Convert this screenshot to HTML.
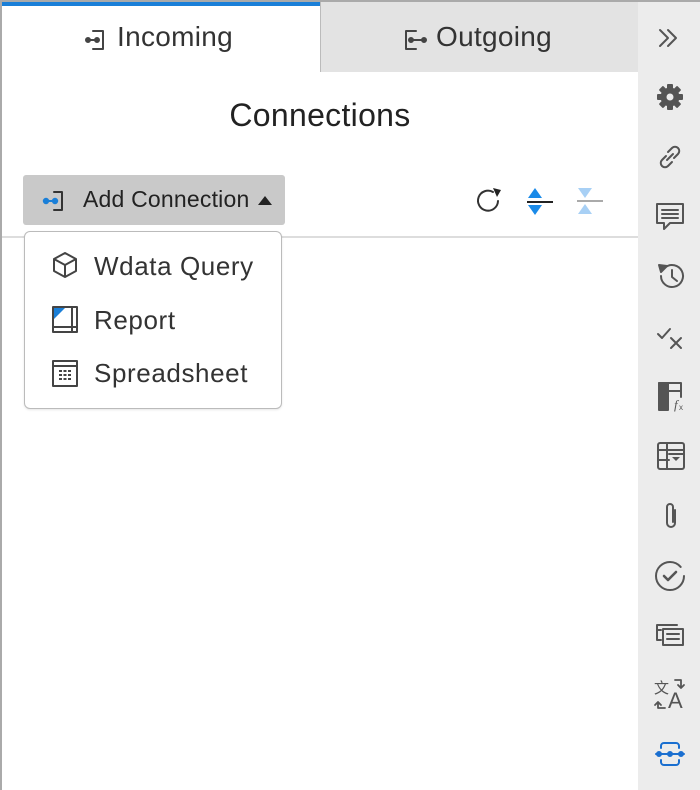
<!DOCTYPE html><html><head><style>
body{margin:0;width:700px;height:790px;overflow:hidden;font-family:"Liberation Sans",sans-serif;background:#fff;position:relative}
.a{position:absolute}
svg{position:absolute;fill:none;stroke-width:2;stroke-linecap:round;stroke-linejoin:round}
.t{font-size:28px;color:#333;letter-spacing:0.3px}
.m{font-size:26px;color:#333;letter-spacing:0.6px}
</style></head><body>
<div class="a" style="left:0;top:0;width:700px;height:2px;background:#aaa"></div>
<div class="a" style="left:0;top:0;width:2px;height:790px;background:#aaa"></div>
<div class="a" style="left:2px;top:2px;width:318px;height:4px;background:#1a7fd8"></div>
<div class="a" style="left:320px;top:2px;width:318px;height:70px;background:#e3e3e3;border-left:1px solid #bbb"></div>
<div class="a" style="left:638px;top:2px;width:62px;height:788px;background:#ececec"></div>
<svg style="left:83px;top:27px;stroke:#444" width="26" height="26" viewBox="0 0 26 26"><path d="M10 4h10v18H10M4 13h11"/><circle cx="5" cy="13" r="2" fill="#444"/><circle cx="14" cy="13" r="2" fill="#444"/></svg>
<div class="a t" style="left:117px;top:21px">Incoming</div>
<svg style="left:402px;top:27px;stroke:#444" width="28" height="26" viewBox="0 0 28 26"><path d="M14 4H4v18h10M8 13h14"/><circle cx="9" cy="13" r="2" fill="#444"/><circle cx="22" cy="13" r="2" fill="#444"/></svg>
<div class="a t" style="left:436px;top:21px">Outgoing</div>
<div class="a" style="left:0;top:97px;width:640px;text-align:center;font-size:32px;color:#222;letter-spacing:0.3px">Connections</div>
<div class="a" style="left:23px;top:175px;width:262px;height:50px;background:#c9c9c9;border-radius:3px"></div>
<svg style="left:42px;top:189px" width="26" height="24" viewBox="0 0 26 24"><path d="M12 3h8v18h-8" stroke="#333"/><path d="M3 12h11" stroke="#1a7fd8"/><circle cx="4" cy="12" r="2.2" fill="#1a7fd8" stroke="#1a7fd8"/><circle cx="13" cy="12" r="2.2" fill="#1a7fd8" stroke="#1a7fd8"/></svg>
<div class="a" style="left:83px;top:186px;font-size:23px;color:#222;letter-spacing:0.2px">Add Connection</div>
<div class="a" style="left:258px;top:196px;width:0;height:0;border:7px solid transparent;border-bottom:9px solid #222;border-top:0"></div>
<svg style="left:473px;top:185px" width="32" height="32" viewBox="0 0 32 32"><path d="M25 16a10 10 0 1 1-5-9" stroke="#333"/><path d="M20 3l8 2-4 7z" fill="#222"/></svg>
<div class="a" style="left:528px;top:188px;border:7px solid transparent;border-bottom:10px solid #1a8ae8;border-top:0"></div>
<div class="a" style="left:527px;top:201px;width:26px;height:2px;background:#222"></div>
<div class="a" style="left:528px;top:205px;border:7px solid transparent;border-top:10px solid #1a8ae8;border-bottom:0"></div>
<div class="a" style="left:578px;top:188px;border:7px solid transparent;border-top:10px solid #a8d0f5;border-bottom:0"></div>
<div class="a" style="left:577px;top:200px;width:26px;height:2px;background:#aaa"></div>
<div class="a" style="left:578px;top:204px;border:7px solid transparent;border-bottom:10px solid #a8d0f5;border-top:0"></div>
<div class="a" style="left:2px;top:236px;width:636px;height:2px;background:#ddd"></div>
<div class="a" style="left:24px;top:231px;width:256px;height:176px;background:#fff;border:1px solid #bbb;border-radius:6px;box-shadow:0 1px 2px rgba(0,0,0,.1)"></div>
<svg style="left:50px;top:250px;stroke:#444" width="30" height="30" viewBox="0 0 30 30"><path d="M15 3l11 6v12l-11 6-11-6V9zM4 9l11 6 11-6M15 15v12"/></svg>
<div class="a m" style="left:94px;top:251px">Wdata Query</div>
<svg style="left:50px;top:303px;stroke:#444" width="30" height="32" viewBox="0 0 30 32"><path d="M3 4h24v25H3z"/><path d="M4 5h11L4 16z" fill="#1a7fd8" stroke="none"/><path d="M3 24h24M22 4v25"/></svg>
<div class="a m" style="left:94px;top:305px">Report</div>
<svg style="left:50px;top:357px;stroke:#444" width="30" height="32" viewBox="0 0 30 32"><path d="M3 4h24v25H3zM3 9h24"/><g fill="#444" stroke="none"><rect x="9" y="13" width="3" height="2"/><rect x="13.5" y="13" width="3" height="2"/><rect x="18" y="13" width="3" height="2"/><rect x="9" y="17" width="3" height="2"/><rect x="13.5" y="17" width="3" height="2"/><rect x="18" y="17" width="3" height="2"/><rect x="9" y="21" width="3" height="2"/><rect x="13.5" y="21" width="3" height="2"/><rect x="18" y="21" width="3" height="2"/></g></svg>
<div class="a m" style="left:94px;top:358px">Spreadsheet</div>
<!-- sidebar -->
<svg style="left:656px;top:26px;stroke:#555" width="28" height="24" viewBox="0 0 28 24"><path d="M4 4l8 8-8 8M12 4l8 8-8 8"/></svg>
<svg style="left:655px;top:82px" width="30" height="30" viewBox="0 0 30 30"><g fill="#555"><rect x="12" y="2" width="6" height="26" rx="1"/><rect x="12" y="2" width="6" height="26" rx="1" transform="rotate(45 15 15)"/><rect x="12" y="2" width="6" height="26" rx="1" transform="rotate(90 15 15)"/><rect x="12" y="2" width="6" height="26" rx="1" transform="rotate(135 15 15)"/><circle cx="15" cy="15" r="9.5"/></g><circle cx="15" cy="15" r="3.5" fill="#ececec"/></svg>
<svg style="left:656px;top:143px;stroke:#555" width="28" height="28" viewBox="0 0 28 28"><path d="M12 9l4-4a4 4 0 0 1 6 6l-4 4M16 19l-4 4a4 4 0 0 1-6-6l4-4M11 17l6-6"/></svg>
<svg style="left:654px;top:201px;stroke:#555" width="32" height="34" viewBox="0 0 32 34"><path d="M3 3h26v19H16l-6 6v-6H3z"/><path d="M8 9h16M8 13h16M8 17h16"/></svg>
<svg style="left:655px;top:260px;stroke:#555" width="32" height="32" viewBox="0 0 32 32"><path d="M6 16a11 11 0 1 0 4-8.5"/><path d="M4 5l8 1-6 6z" fill="#555"/><path d="M17 10v7l5 4"/></svg>
<svg style="left:655px;top:320px;stroke:#555" width="32" height="32" viewBox="0 0 32 32"><path d="M3 14l4 4 8-9M16 18l10 10M26 18L16 28"/></svg>
<svg style="left:655px;top:380px;stroke:#555" width="32" height="32" viewBox="0 0 32 32"><path d="M4 3h22v14M13 3v8M4 11h22"/><path d="M4 3h9v27H4z" fill="#555"/><text x="19" y="29" font-size="13" font-style="italic" fill="#555" stroke="none" font-family="Liberation Serif">f</text><text x="24" y="30" font-size="8" fill="#555" stroke="none">x</text></svg>
<svg style="left:655px;top:440px;stroke:#555" width="32" height="32" viewBox="0 0 32 32"><rect x="3" y="3" width="26" height="26" rx="2"/><path d="M3 10h26M3 20h11M12 3v26M14 14h15"/><path d="M17 17h8l-4 4z" fill="#555" stroke="none"/></svg>
<svg style="left:658px;top:500px;stroke:#555" width="26" height="32" viewBox="0 0 26 32"><path d="M17 10v13a4 4 0 0 1-8 0V7a3 3 0 0 1 6 0v15"/></svg>
<svg style="left:653px;top:559px;stroke:#555" width="34" height="34" viewBox="0 0 34 34"><circle cx="17" cy="17" r="14" stroke-dasharray="78 10"/><path d="M11 17l4 4 8-8" stroke-width="2.6"/></svg>
<svg style="left:653px;top:619px;stroke:#555" width="34" height="32" viewBox="0 0 34 32"><path d="M24 6H4v15h4M10 10h20v16H10zM14 15h12M14 20h12M8 11H4"/></svg>
<div class="a" style="left:654px;top:677px;font-size:15px;color:#555">文</div>
<div class="a" style="left:668px;top:688px;font-size:22px;color:#555">A</div>
<svg style="left:653px;top:678px;stroke:#555;stroke-width:1.8" width="36" height="36" viewBox="0 0 36 36"><path d="M22 2h6v8M25 7l3 3 3-3M12 30H5v-6M2 27l3-3 3 3"/></svg>
<svg style="left:653px;top:738px;stroke:#1a6fd0" width="34" height="32" viewBox="0 0 34 32"><path d="M8 10V8a3 3 0 0 1 3-3h12a3 3 0 0 1 3 3v2M8 22v2a3 3 0 0 0 3 3h12a3 3 0 0 0 3-3v-2M3 16h28"/><circle cx="6" cy="16" r="2" fill="#1a6fd0"/><circle cx="17" cy="16" r="2" fill="#1a6fd0"/><circle cx="28" cy="16" r="2" fill="#1a6fd0"/></svg>
</body></html>
